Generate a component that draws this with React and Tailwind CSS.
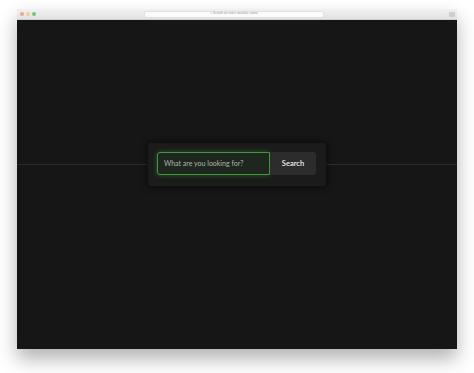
import React from "react";

const font = { fontFamily: "Lato, 'Open Sans', sans-serif" };

const TitleBar = () => (
  <div className="relative flex h-[11px] items-center bg-gradient-to-b from-[#f1f1f1] to-[#e2e2e2] border-b border-[#d0d0d0]">
    <div className="ml-[3px] flex gap-[2px]">
      <span className="h-[4px] w-[4px] rounded-full bg-[#e9a49c]" />
      <span className="h-[4px] w-[4px] rounded-full bg-[#ecd28f]" />
      <span className="h-[4px] w-[4px] rounded-full bg-[#6fc87a]" />
    </div>
    <div className="ml-[108px] flex h-[7px] w-[180px] items-center justify-center rounded-[2px] border border-[#e2e2e2] bg-[#fbfbfb]">
      <span className="text-[3.5px] leading-none text-[#9a9a9a]">⌕ Search or enter website name</span>
    </div>
    <div className="ml-auto mr-[2px] h-[5px] w-[6px] rounded-[1px] bg-[#cfcfcf]" />
  </div>
);

const SearchBox = () => (
  <div className="flex items-center rounded-[3px] border border-[#101010] bg-[#1b1b1b] pl-[9px] pr-[10px] pt-[9px] pb-[11px] shadow-[0_0_6px_rgba(0,0,0,0.6)]">
    <div className="flex h-[23px] w-[113px] items-center rounded-l-[3px] border border-[#3f9a3a] bg-[#1e271d] pl-[6px] shadow-[0_0_5px_rgba(70,170,60,0.45)]">
      <span className="text-[7px] text-[#b3b3b3]">What are you looking for?</span>
    </div>
    <div className="flex h-[23px] w-[46px] items-center justify-center rounded-r-[3px] bg-[#2c2c2c]">
      <span className="text-[7.5px] font-semibold text-[#f2f2f2]">Search</span>
    </div>
  </div>
);

export default function App() {
  return (
    <div className="h-[373px] w-[474px] bg-white pt-[9px]" style={font}>
      <div className="ml-[17px] flex h-[340px] w-[440px] flex-col shadow-[0_10px_18px_rgba(0,0,0,0.3)]">
        <TitleBar />
        <div className="flex flex-1 flex-col bg-[#161616] pt-[122px]">
          <div className="flex items-center">
            <div className="h-px flex-1 bg-[#2b2b2b]" />
            <SearchBox />
            <div className="h-px flex-1 bg-[#2b2b2b]" />
          </div>
        </div>
      </div>
    </div>
  );
}
